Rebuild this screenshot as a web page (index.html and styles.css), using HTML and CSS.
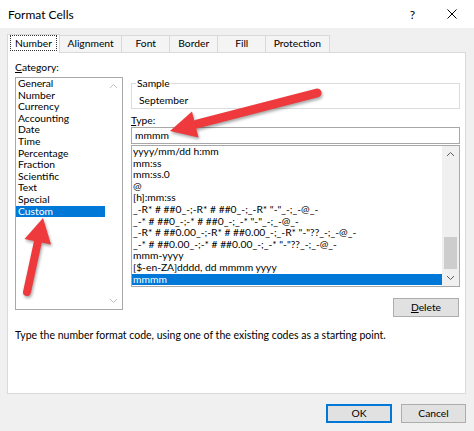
FILE: index.html
```html
<!DOCTYPE html>
<html lang="en">
<head>
<meta charset="utf-8">
<title>Format Cells</title>
<link rel="stylesheet" href="styles.css">
</head>
<body>
<div class="window">
  <div class="titlebar">
    <span class="title">Format Cells</span>
    <span class="help">?</span>
    <svg class="close" width="10" height="10" viewBox="0 0 10 10"><path d="M0.5 0.5 L9.5 9.5 M9.5 0.5 L0.5 9.5" stroke="#000" stroke-width="1" fill="none"/></svg>
  </div>
  <div class="main">
    <div class="tabs">
      <div class="tab active"><span class="focus">Number</span></div>
      <div class="tab">Alignment</div>
      <div class="tab">Font</div>
      <div class="tab">Border</div>
      <div class="tab">Fill</div>
      <div class="tab">Protection</div>
    </div>
    <div class="panel">
      <div class="cols">
        <div class="left">
          <div class="label"><u>C</u>ategory:</div>
          <div class="listbox cat">
            <div class="items">
              <div class="item">General</div>
              <div class="item">Number</div>
              <div class="item">Currency</div>
              <div class="item">Accounting</div>
              <div class="item">Date</div>
              <div class="item">Time</div>
              <div class="item">Percentage</div>
              <div class="item">Fraction</div>
              <div class="item">Scientific</div>
              <div class="item">Text</div>
              <div class="item">Special</div>
              <div class="item sel">Custom</div>
            </div>
            <div class="scrollbar disabled">
              <svg class="arrow" width="17" height="17" viewBox="0 0 17 17"><path d="M5 10 L8.5 6.5 L12 10" stroke="#c2c2c2" stroke-width="1" fill="none"/></svg>
              <div class="track"></div>
              <svg class="arrow" width="17" height="17" viewBox="0 0 17 17"><path d="M5 7 L8.5 10.5 L12 7" stroke="#c2c2c2" stroke-width="1" fill="none"/></svg>
            </div>
          </div>
        </div>
        <div class="right">
          <fieldset class="sample">
            <legend>Sample</legend>
            <div class="sample-value">September</div>
          </fieldset>
          <div class="label type-label"><u>T</u>ype:</div>
          <div class="input">mmmm</div>
          <div class="listbox types">
            <div class="items">
              <div class="item">yyyy/mm/dd h:mm</div>
              <div class="item">mm:ss</div>
              <div class="item">mm:ss.0</div>
              <div class="item">@</div>
              <div class="item">[h]:mm:ss</div>
              <div class="item">_-R* # ##0_-;-R* # ##0_-;_-R* "-"_-;_-@_-</div>
              <div class="item">_-* # ##0_-;-* # ##0_-;_-* "-"_-;_-@_-</div>
              <div class="item">_-R* # ##0.00_-;-R* # ##0.00_-;_-R* "-"??_-;_-@_-</div>
              <div class="item">_-* # ##0.00_-;-* # ##0.00_-;_-* "-"??_-;_-@_-</div>
              <div class="item">mmm-yyyy</div>
              <div class="item">[$-en-ZA]dddd, dd mmmm yyyy</div>
              <div class="item sel">mmmm</div>
            </div>
            <div class="scrollbar">
              <svg class="arrow" width="17" height="17" viewBox="0 0 17 17"><path d="M5 10 L8.5 6.5 L12 10" stroke="#606060" stroke-width="1" fill="none"/></svg>
              <div class="track"><div class="thumb"></div></div>
              <svg class="arrow" width="17" height="17" viewBox="0 0 17 17"><path d="M5 7 L8.5 10.5 L12 7" stroke="#606060" stroke-width="1" fill="none"/></svg>
            </div>
          </div>
          <div class="delete-row"><button class="btn delete"><u>D</u>elete</button></div>
        </div>
      </div>
      <p class="desc">Type the number format code, using one of the existing codes as a starting point.</p>
    </div>
    <div class="footer">
      <button class="btn default">OK</button>
      <button class="btn">Cancel</button>
    </div>
  </div>
  <svg class="arrows" width="474" height="431" viewBox="0 0 474 431">
    <g class="red">
      <line x1="317" y1="93" x2="197" y2="124" stroke="#ee3a3c" stroke-width="9" stroke-linecap="round"/>
      <polygon points="170,131 192,111.5 198.5,137.5" fill="#ee3a3c"/>
      <line x1="27" y1="292" x2="38.5" y2="239" stroke="#ee3a3c" stroke-width="8" stroke-linecap="round"/>
      <polygon points="43,218 24.5,239 51,244.5" fill="#ee3a3c"/>
    </g>
  </svg>
</div>
</body>
</html>
```
FILE: styles.css
```css
html, body {
  margin: 0;
  padding: 0;
}
body {
  background: #f0f0f0;
  font-family: Lato, "Noto Sans", sans-serif;
  font-size: 10.3px;
  color: #000;
}
.window {
  position: relative;
  width: 474px;
  height: 431px;
  overflow: hidden;
  background: #f0f0f0;
}
.titlebar {
  height: 28px;
  background: #fff;
  display: flex;
  align-items: center;
  padding-left: 8px;
}
.title {
  flex: 1;
  font-size: 12px;
}
.help {
  font-size: 12px;
  margin-right: 32px;
}
.close {
  margin-right: 17px;
}
.main {
  padding: 0 8px 0 7px;
}
.tabs {
  display: flex;
  align-items: flex-end;
  height: 24px;
}
.tab {
  box-sizing: border-box;
  height: 17px;
  min-width: 49px;
  padding: 0 7.5px;
  border: 1px solid #d9d9d9;
  border-bottom: none;
  margin-left: -1px;
  background: #f4f4f4;
  line-height: 15px;
  text-align: center;
}
.tab.active {
  height: 19px;
  margin: 0 0 -1px 0;
  padding: 1px 3px 0;
  background: #fff;
  position: relative;
  z-index: 1;
  width: 53px;
  min-width: 0;
}
.focus {
  display: block;
  outline: 1px dotted #333;
  line-height: 14px;
  padding: 0 2px;
}
.panel {
  box-sizing: border-box;
  height: 342px;
  background: #fff;
  border: 1px solid #d9d9d9;
  padding: 7px 5px 0 7px;
}
.cols {
  display: grid;
  grid-template-columns: 108px 329px;
  column-gap: 8px;
}
.label {
  height: 14px;
  line-height: 14px;
}
.listbox {
  box-sizing: border-box;
  border: 1px solid #a8a8a8;
  display: flex;
  background: #fff;
}
.listbox.cat {
  margin-top: 3px;
  height: 233px;
}
.listbox .items {
  flex: 1;
  min-width: 0;
  overflow: hidden;
}
.item {
  height: 11.6px;
  line-height: 11.6px;
  white-space: nowrap;
}
.cat .item {
  padding-left: 2px;
}
.types .item {
  padding-left: 1px;
}
.item.sel {
  background: #0078d7;
  color: #fff;
}
.scrollbar {
  width: 17px;
  display: flex;
  flex-direction: column;
  background: #f0f0f0;
}
.scrollbar.disabled {
  background: #fff;
}
.arrow {
  display: block;
  flex: none;
}
.track {
  flex: 1;
  display: flex;
  flex-direction: column;
  justify-content: flex-end;
  align-items: center;
}
.thumb {
  width: 13px;
  height: 32px;
  background: #cdcdcd;
}
.sample {
  margin: 16px 0 0;
  padding: 3px 7px 1px;
  border: 1px solid #dcdcdc;
  min-width: 0;
}
.sample legend {
  padding: 0 1px;
  margin-left: -3px;
  line-height: 14px;
}
.sample-value {
  line-height: 14px;
}
.type-label {
  margin-top: 4px;
}
.input {
  box-sizing: border-box;
  height: 17px;
  border: 1px solid #a8a8a8;
  padding-left: 3px;
  line-height: 15px;
}
.listbox.types {
  margin-top: 1px;
  height: 142px;
}
.delete-row {
  display: flex;
  justify-content: flex-end;
  margin-top: 11px;
  padding-right: 1px;
}
.btn {
  box-sizing: border-box;
  height: 19px;
  width: 65px;
  padding: 0;
  background: #e1e1e1;
  border: 1px solid #adadad;
  font: inherit;
  color: #000;
  line-height: 17px;
}
.btn.delete {
  width: 66px;
}
.btn.default {
  width: 66px;
  border-color: #0078d7;
  box-shadow: inset 0 0 0 1px #0078d7;
}
.desc {
  margin: 11px 0 0;
  line-height: 14px;
  font-size: 10.5px;
}
.footer {
  display: flex;
  justify-content: flex-end;
  gap: 9px;
  margin-top: 10px;
}
.arrows {
  position: absolute;
  left: 0;
  top: 0;
  pointer-events: none;
}
.red {
  filter: drop-shadow(1px 2px 1.5px rgba(0, 0, 0, 0.35));
}
```
